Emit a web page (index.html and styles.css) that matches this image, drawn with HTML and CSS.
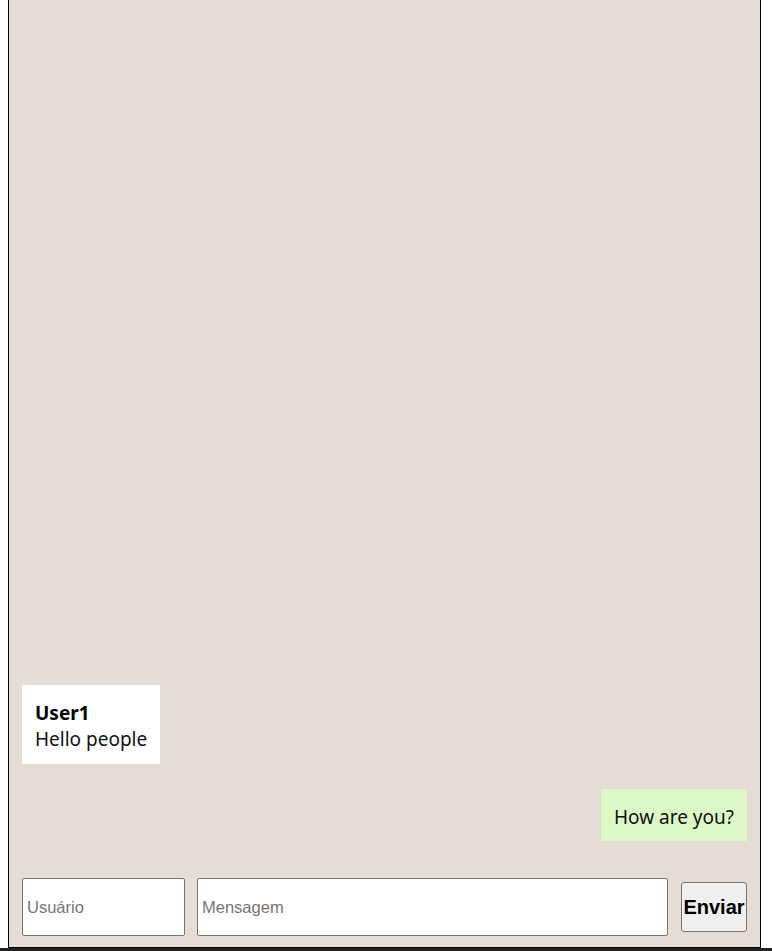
FILE: index.html
```html
<!DOCTYPE html>
<html lang="pt-BR">
<head>
  <meta charset="UTF-8">
  <title>Chat</title>
  <link rel="stylesheet" href="styles.css">
</head>
<body>
  <div class="chat">
    <div class="messages">
      <div class="msg other">
        <div class="author">User1</div>
        <div class="text">Hello people</div>
      </div>
      <div class="msg mine">
        <div class="text">How are you?</div>
      </div>
    </div>
    <form class="send-form" onsubmit="return false;">
      <input type="text" class="user-input" placeholder="Usuário">
      <input type="text" class="msg-input" placeholder="Mensagem">
      <button type="submit">Enviar</button>
    </form>
  </div>
  <div class="bottom-line"></div>
</body>
</html>
```

FILE: styles.css
```css
html, body { margin: 0; padding: 0; height: 100%; }
body { background: white; display: flex; flex-direction: column; overflow: hidden; }
.chat { margin-left: 8px; width: 753px; height: 948px; flex-shrink: 0; box-sizing: border-box; border: 1px solid black; border-top: none; background: #e5ddd5; display: flex; flex-direction: column; }
.messages { flex: 1; display: flex; flex-direction: column; justify-content: flex-end; padding: 0 13px; }
.msg { padding: 15px 13px 11px; font-family: "Noto Sans", sans-serif; font-size: 19px; line-height: 26.5px; color: #111; }
.msg.other { background: white; align-self: flex-start; }
.msg.mine { background: #dcf8c6; align-self: flex-end; margin-top: 25px; }
.author { font-weight: bold; color: black; }
.send-form { display: flex; align-items: center; padding: 37px 13px 11px; }
.send-form input { height: 58px; box-sizing: border-box; border: 1px solid #767676; border-radius: 2px; padding: 0 4px; font-family: "Liberation Sans", Arial, sans-serif; font-size: 16.5px; background: white; }
.send-form input::placeholder { color: #757575; }
.user-input { width: 163px; margin-right: 12px; }
.msg-input { width: 471px; margin-right: 13px; }
button { width: 66px; height: 50px; padding: 0; font-family: "Liberation Sans", Arial, sans-serif; font-size: 20px; font-weight: bold; color: black; background: #efefef; border: 1px solid #767676; border-radius: 3px; }
.bottom-line { height: 3px; flex-shrink: 0; background: #222; }
```
